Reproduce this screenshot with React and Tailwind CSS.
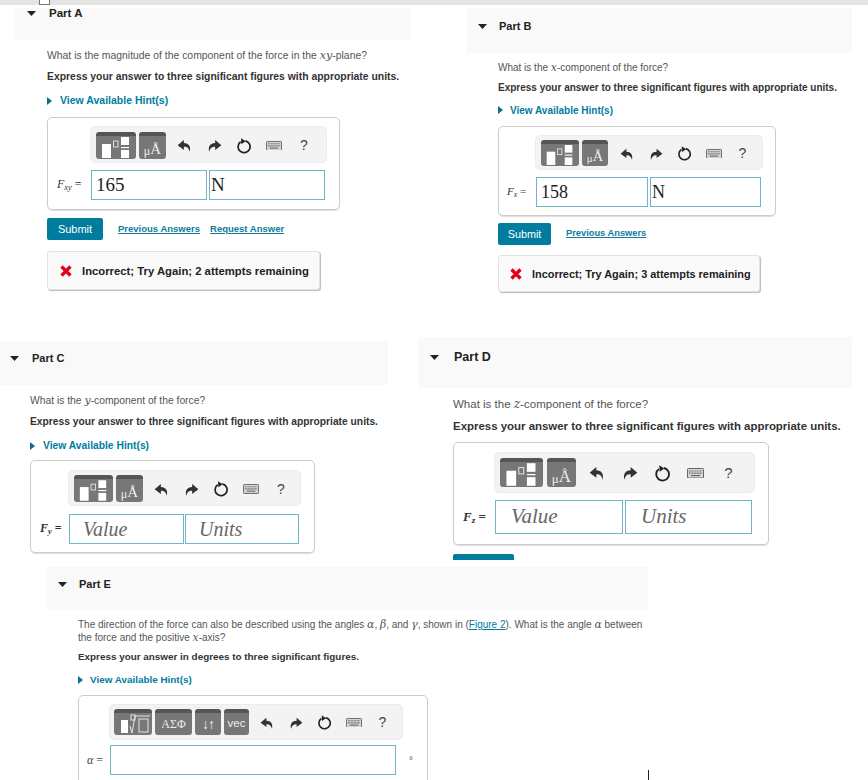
import React from "react";

const sans = "font-['Liberation_Sans',Arial,sans-serif]";

const Arrow = () => (
  <svg width="9" height="5" viewBox="0 0 9 5" className="block">
    <path d="M0 0H9L4.5 5Z" fill="#222" />
  </svg>
);

const Header = ({ title, className, wrap, titleClass = "text-[11px]" }) => (
  <div className={`flex bg-[#f9f9f9] ${className}`}>
    <div className={`flex items-center h-[14px] ${wrap}`}>
      <Arrow />
    </div>
    <span className={`font-bold leading-[14px] text-[#222] ${titleClass}`}>{title}</span>
  </div>
);

const Var = ({ children }) => (
  <i className="font-['DejaVu_Serif',serif] text-[1.08em]">{children}</i>
);

const Hint = ({ className, iconGap }) => (
  <div className={`flex items-center h-[16px] whitespace-nowrap font-bold text-[#007c9f] ${className}`}>
    <svg width="5" height="8" viewBox="0 0 5 8" className={iconGap}>
      <path d="M0 0L5 4L0 8Z" fill="#0b6f8f" />
    </svg>
    View Available Hint(s)
  </div>
);

const UndoIcon = ({ s, flip }) => (
  <svg width={s} height={s} viewBox="0 0 24 24" className={flip ? "-scale-x-100" : ""}>
    <path d="M11 3L1 11.5L11 19V14C16 13.5 19 16 20.5 22C22.5 14 19 8 11 8Z" fill="#333" />
  </svg>
);

const RefreshIcon = ({ s }) => (
  <svg width={s} height={s} viewBox="0 0 24 24" fill="none">
    <path d="M14 4.2A9 9 0 1 1 7 5.6" stroke="#222" strokeWidth="2.6" />
    <path d="M7.5 0.5L14.5 5L8 9.5Z" fill="#222" />
  </svg>
);

const KeyboardIcon = ({ w }) => (
  <svg width={w} height={w * 0.62} viewBox="0 0 26 16">
    <rect x="0.7" y="0.7" width="24.6" height="14.6" rx="1.5" fill="#d8d8d8" stroke="#555" strokeWidth="1.4" />
    <path d="M3 4.5H23M3 7.8H23" stroke="#666" strokeWidth="1.8" strokeDasharray="1.6 0.8" />
    <path d="M6 11.5H20" stroke="#666" strokeWidth="1.8" />
  </svg>
);

const Tools = ({ item, s, kw, q = "text-[14px]", className = "" }) => (
  <div className={`mt-[1px] flex items-center ${className}`}>
    <div className={`flex justify-center ${item}`}><UndoIcon s={s} /></div>
    <div className={`flex justify-center ${item}`}><UndoIcon s={s} flip /></div>
    <div className={`flex justify-center ${item}`}><RefreshIcon s={s + 1} /></div>
    <div className={`flex justify-center ${item}`}><KeyboardIcon w={kw} /></div>
    <div className={`text-center text-[#444] ${q} ${item}`}>?</div>
  </div>
);

const Btn = ({ className, children }) => (
  <div className={`flex items-center justify-center overflow-hidden rounded-[3px] border-t-[4px] border-[#555] bg-[#777] text-[#eee] ${className}`}>
    {children}
  </div>
);

const TemplateBtn = ({ className }) => (
  <Btn className={`!items-stretch ${className}`}>
    <svg viewBox="0 0 40 23" className="w-full h-full">
      <rect x="6" y="8" width="9" height="14" fill="#fff" />
      <rect x="17.5" y="5" width="4.5" height="6" fill="none" stroke="#ddd" strokeWidth="1" />
      <rect x="25" y="1" width="8" height="8" fill="#fff" />
      <rect x="25" y="11" width="8" height="1.2" fill="#fff" />
      <rect x="25" y="14" width="8" height="8" fill="#fff" />
    </svg>
  </Btn>
);

const UnitBtn = ({ className, mu, ang }) => (
  <Btn className={`font-['Liberation_Serif',serif] leading-none !items-end pb-[2px] text-[#ddd] ${className}`}>
    <span className={mu}>μ</span>
    <span className={ang}>Å</span>
  </Btn>
);

const Toolbar = ({ className, children }) => (
  <div className={`flex items-center rounded-[5px] bg-[#f3f3f3] border border-[#ececec] ${className}`}>{children}</div>
);

const Field = ({ className, value, placeholder, size }) => (
  <div
    className={`flex items-center border border-[#72b3c7] bg-white font-['Liberation_Serif',serif] ${size} ${className} ${
      placeholder ? "italic text-[#666]" : "text-[#222]"
    }`}
  >
    {value || placeholder}
  </div>
);

const Label = ({ base, sub, className }) => (
  <span className={`font-['Liberation_Serif',serif] text-[#333] ${className}`}>
    <i>{base}</i>
    <i className="text-[0.7em] align-[-2px]">{sub}</i> =
  </span>
);

const Feedback = ({ className, textClass, children }) => (
  <div className={`flex items-center rounded-[3px] border border-[#e2e2e2] bg-[#fafafa] shadow-[1px_1px_1px_#bbb] ${className}`}>
    <svg width="12" height="12" viewBox="0 0 12 12" className="shrink-0">
      <path d="M1.5 1.5L10.5 10.5M10.5 1.5L1.5 10.5" stroke="#e0001b" strokeWidth="3.2" />
    </svg>
    <span className={`mt-[1px] whitespace-nowrap font-bold text-[#222] ${textClass}`}>{children}</span>
  </div>
);

const SubmitBtn = ({ className, children }) => (
  <div className={`flex items-center justify-center rounded-[2px] bg-[#007c9f] text-white ${className}`}>{children}</div>
);

const LinkText = ({ children }) => (
  <span className="font-bold text-[#0f7c9c] underline">{children}</span>
);

export default function App() {
  return (
    <div className={`h-[780px] w-[868px] overflow-hidden bg-white ${sans}`}>
      {/* top strip */}
      <div className="h-[5px] bg-[#e4e4e4] pl-[39px]">
        <div className="h-[5px] w-[11px] border-x border-b border-[#777] bg-white" />
      </div>

      {/* Part A and B */}
      <div className="mt-[3px] flex h-[329px]">
        <div className="ml-[15px] w-[395px]">
          <Header title="Part A" className="h-[32px] pl-[12px]" wrap="w-[22px] -mt-[2px]" titleClass="text-[11.5px] -mt-[2px]" />
          <div className="pl-[32px]">
            <p className="mt-[8px] whitespace-nowrap text-[10.4px] leading-[16px] text-[#555]">
              What is the magnitude of the component of the force in the <Var>xy</Var>-plane?
            </p>
            <p className="mt-[5px] whitespace-nowrap text-[10.4px] font-bold leading-[16px] text-[#333]">
              Express your answer to three significant figures with appropriate units.
            </p>
            <Hint className="mt-[8px] text-[10.5px]" iconGap="mr-[8px]" />
            <div className="mt-[8px] h-[93px] w-[293px] rounded-[5px] border border-[#ccc] shadow-[0_1px_1px_#ddd]">
              <Toolbar className="ml-[42px] mt-[8px] h-[37px] w-[237px] gap-[3px] pl-[5px] pt-[1px]">
                <TemplateBtn className="h-[27px] w-[40px]" />
                <UnitBtn className="h-[27px] w-[27px]" mu="text-[12px]" ang="text-[15px]" />
                <Tools item="w-[30px]" s={15} kw={16} />
              </Toolbar>
              <div className="ml-[9px] mt-[7px] flex items-center">
                <Label base="F" sub="xy" className="w-[34px] text-[12px]" />
                <Field className="h-[30px] w-[116px] pl-[4px]" value="165" size="text-[19px]" />
                <Field className="ml-[2px] h-[30px] w-[116px] pl-[1px]" value="N" size="text-[19px]" />
              </div>
            </div>
            <div className="mt-[8px] flex items-center text-[9.5px]">
              <SubmitBtn className="h-[22px] w-[56px] text-[11px]">Submit</SubmitBtn>
              <div className="ml-[15px]"><LinkText>Previous Answers</LinkText></div>
              <div className="ml-[10px]"><LinkText>Request Answer</LinkText></div>
            </div>
            <Feedback className="mt-[11px] h-[39px] w-[273px] pl-[12px]" textClass="ml-[10px] text-[11.3px]">
              Incorrect; Try Again; 2 attempts remaining
            </Feedback>
          </div>
        </div>

        <div className="ml-[57px] w-[385px]">
          <Header title="Part B" className="h-[45px] pl-[11px] pt-[11px]" wrap="w-[21px]" />
          <div className="pl-[31px]">
            <p className="mt-[7px] whitespace-nowrap text-[10px] leading-[16px] text-[#555]">
              What is the <Var>x</Var>-component of the force?
            </p>
            <p className="mt-[4px] whitespace-nowrap text-[10px] font-bold leading-[16px] text-[#333]">
              Express your answer to three significant figures with appropriate units.
            </p>
            <Hint className="mt-[6px] text-[10px]" iconGap="mr-[7px]" />
            <div className="mt-[8px] h-[90px] w-[278px] rounded-[5px] border border-[#ccc] shadow-[0_1px_1px_#ddd]">
              <Toolbar className="ml-[36px] mt-[8px] h-[35px] w-[228px] gap-[3px] pl-[5px] pt-[1px]">
                <TemplateBtn className="h-[26px] w-[38px]" />
                <UnitBtn className="h-[26px] w-[26px]" mu="text-[11px]" ang="text-[15px]" />
                <Tools item="w-[29px]" s={14} kw={16} className="ml-[1px]" />
              </Toolbar>
              <div className="ml-[8px] mt-[7px] flex items-center">
                <Label base="F" sub="x" className="w-[29px] text-[11px]" />
                <Field className="h-[30px] w-[112px] pl-[4px]" value="158" size="text-[18px]" />
                <Field className="ml-[2px] h-[30px] w-[111px] pl-[1px]" value="N" size="text-[18px]" />
              </div>
            </div>
            <div className="mt-[7px] flex items-center text-[9.3px]">
              <SubmitBtn className="h-[22px] w-[53px] text-[10.8px]">Submit</SubmitBtn>
              <div className="ml-[15px]"><LinkText>Previous Answers</LinkText></div>
            </div>
            <Feedback className="mt-[10px] h-[37px] w-[262px] pl-[11px]" textClass="ml-[10px] text-[10.9px]">
              Incorrect; Try Again; 3 attempts remaining
            </Feedback>
          </div>
        </div>
      </div>

      {/* Part C and D */}
      <div className="flex h-[230px]">
        <div className="mt-[4px] w-[388px]">
          <Header title="Part C" className="h-[44px] pl-[10px] pt-[10px]" wrap="w-[22px]" />
          <div className="pl-[30px]">
            <p className="mt-[8px] whitespace-nowrap text-[10.3px] leading-[16px] text-[#555]">
              What is the <Var>y</Var>-component of the force?
            </p>
            <p className="mt-[5px] whitespace-nowrap text-[10.27px] font-bold leading-[16px] text-[#333]">
              Express your answer to three significant figures with appropriate units.
            </p>
            <Hint className="mt-[8px] text-[10.3px]" iconGap="mr-[8px]" />
            <div className="mt-[6px] h-[93px] w-[285px] rounded-[5px] border border-[#ccc] shadow-[0_1px_1px_#ddd]">
              <Toolbar className="ml-[37px] mt-[9px] h-[36px] w-[233px] gap-[3px] pl-[5px] pt-[1px]">
                <TemplateBtn className="h-[27px] w-[39px]" />
                <UnitBtn className="h-[27px] w-[27px]" mu="text-[12px]" ang="text-[15px]" />
                <Tools item="w-[30px]" s={15} kw={16} />
              </Toolbar>
              <div className="ml-[9px] mt-[8px] flex items-center">
                <Label base="F" sub="y" className="w-[29px] text-[12px] font-bold" />
                <Field className="h-[30px] w-[115px] pl-[13px]" placeholder="Value" size="text-[20px]" />
                <Field className="ml-[1px] h-[30px] w-[114px] pl-[13px]" placeholder="Units" size="text-[20px]" />
              </div>
            </div>
          </div>
        </div>

        <div className="ml-[30px] h-[223px] w-[434px] overflow-hidden">
          <Header title="Part D" className="h-[51px] pl-[12px] pt-[13px]" wrap="w-[24px]" titleClass="text-[12.5px]" />
          <div className="pl-[35px]">
            <p className="mt-[8px] whitespace-nowrap text-[11.5px] leading-[16px] text-[#555]">
              What is the <Var>z</Var>-component of the force?
            </p>
            <p className="mt-[6px] whitespace-nowrap text-[11.44px] font-bold leading-[16px] text-[#333]">
              Express your answer to three significant figures with appropriate units.
            </p>
            <div className="mt-[8px] h-[103px] w-[316px] rounded-[5px] border border-[#ccc] shadow-[0_1px_1px_#ddd]">
              <Toolbar className="ml-[40px] mt-[9px] h-[41px] w-[261px] gap-[4px] pl-[5px]">
                <TemplateBtn className="h-[29px] w-[43px]" />
                <UnitBtn className="h-[29px] w-[29px]" mu="text-[13px]" ang="text-[17px]" />
                <Tools item="w-[33px]" s={16} kw={17} q="text-[15px]" />
              </Toolbar>
              <div className="ml-[9px] mt-[7px] flex items-center">
                <Label base="F" sub="z" className="w-[32px] text-[13px] font-bold" />
                <Field className="h-[34px] w-[128px] pl-[15px]" placeholder="Value" size="text-[21px]" />
                <Field className="ml-[2px] h-[34px] w-[127px] pl-[15px]" placeholder="Units" size="text-[21px]" />
              </div>
            </div>
            <SubmitBtn className="mt-[9px] h-[22px] w-[61px]" />
          </div>
        </div>
      </div>

      {/* Part E */}
      <div className="flex">
        <div className="ml-[47px] w-[601px]">
          <Header title="Part E" className="h-[43px] pl-[11px] pt-[10px]" wrap="w-[21px]" />
          <div className="pl-[31px]">
            <p className="mt-[8px] whitespace-nowrap text-[10px] leading-[13px] text-[#555]">
              The direction of the force can also be described using the angles <Var>α</Var>, <Var>β</Var>, and <Var>γ</Var>, shown in (
              <span className="text-[#007c9f] underline">Figure 2</span>). What is the angle <Var>α</Var> between
              <br />
              the force and the positive <Var>x</Var>-axis?
            </p>
            <p className="mt-[5px] whitespace-nowrap text-[9.9px] font-bold leading-[16px] text-[#333]">
              Express your answer in degrees to three significant figures.
            </p>
            <Hint className="mt-[7px] text-[9.9px]" iconGap="mr-[7px]" />
            <div className="mt-[7px] h-[100px] w-[350px] rounded-[5px] border border-[#ccc]">
              <Toolbar className="ml-[30px] mt-[8px] h-[36px] w-[294px] gap-[3px] pl-[4px]">
                <Btn className="!items-stretch h-[26px] w-[38px]">
                  <svg viewBox="0 0 38 22" className="w-full h-full">
                    <rect x="7" y="7" width="7" height="13" fill="#fff" />
                    <path d="M16 13L18 20L21 3H36" fill="none" stroke="#e6e6e6" strokeWidth="1" />
                    <rect x="17" y="2" width="4" height="5" fill="none" stroke="#e6e6e6" strokeWidth="1" />
                    <rect x="25" y="6" width="9" height="13" fill="none" stroke="#e6e6e6" strokeWidth="1" />
                  </svg>
                </Btn>
                <Btn className="h-[26px] w-[37px] font-['Liberation_Serif',serif] text-[12px]">ΑΣΦ</Btn>
                <Btn className="h-[26px] w-[26px] text-[14px] tracking-[-1px]">↓↑</Btn>
                <Btn className="h-[26px] w-[25px] text-[11.5px]">vec</Btn>
                <Tools item="w-[29px]" s={14} kw={16} />
              </Toolbar>
              <div className="ml-[8px] mt-[5px] flex items-center">
                <span className="w-[23px] font-['Liberation_Serif',serif] text-[12px] text-[#444]"><i>α</i> =</span>
                <div className="h-[30px] w-[286px] border border-[#72b3c7]" />
                <span className="ml-[13px] text-[10px] text-[#555]">°</span>
              </div>
            </div>
          </div>
        </div>
        <div className="mt-[203px] h-[10px] w-[1px] bg-[#222]" />
      </div>
    </div>
  );
}
